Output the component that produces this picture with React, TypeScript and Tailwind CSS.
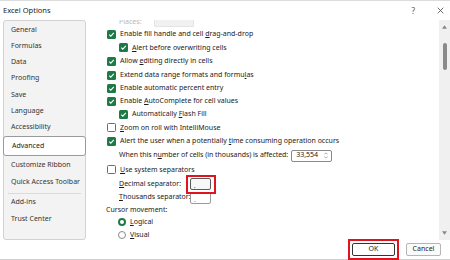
const font = { fontFamily: '"Noto Sans", "Open Sans", sans-serif' };

interface iCheckProps {
	checked?: boolean;
}

const Check = (props: iCheckProps) => {
	return props.checked ? (
		<span className="w-[9px] h-[9px] rounded-[1.5px] bg-[#1d7a46] flex items-center justify-center shrink-0">
			<svg width="7" height="7" viewBox="0 0 10 10">
				<path d="M1.8 5.2 L4 7.3 L8.3 2.7" stroke="white" strokeWidth="1.6" fill="none" />
			</svg>
		</span>
	) : (
		<span className="w-[9px] h-[9px] rounded-[1.5px] border border-[#6b6b6b] bg-white shrink-0"></span>
	);
};

interface iRowProps {
	h: string;
	indent?: boolean;
	checked?: boolean;
	children: React.ReactNode;
}

const Row = (props: iRowProps) => {
	return (
		<div className={`flex items-center gap-[4px] ${props.h} ${props.indent ? "pl-[12px]" : ""}`}>
			<Check checked={props.checked} />
			<span className="whitespace-nowrap">{props.children}</span>
		</div>
	);
};

const NavItem = ({ label, active }: { label: string; active?: boolean }) => {
	if (active) {
		return (
			<div className="-mx-[1px] h-[20px] my-[1px] flex items-center px-[8px] bg-white border border-[#9a9a9a] rounded-[3px] text-[#1a1a1a] whitespace-nowrap">
				{label}
			</div>
		);
	}
	return <div className="h-[16.2px] flex items-center px-[7px] text-[#333] whitespace-nowrap">{label}</div>;
};

const U = ({ children }: { children: React.ReactNode }) => <span className="underline underline-offset-[1px]">{children}</span>;

export default function App() {
	return (
		<div className="w-[450px] h-[260px] bg-white flex flex-col text-[7px] text-[#1b1b1b] border-t border-[#dcdcdc] overflow-hidden" style={font}>
			{/* title bar */}
			<div className="h-[19px] flex items-center pl-[3px] pr-[6px] text-[7.5px] text-[#222]">
				<span className="flex-1">Excel Options</span>
				<span className="mr-[22px] text-[#555] text-[8px]">?</span>
				<svg width="7" height="7" viewBox="0 0 10 10">
					<path d="M1 1 L9 9 M9 1 L1 9" stroke="#444" strokeWidth="1.1" />
				</svg>
			</div>

			<div className="flex flex-1 min-h-0">
				{/* side nav */}
				<div className="ml-[3px] w-[83px] h-[220px] bg-[#f3f3f3] border border-[#d2d2d2] rounded-[3px] pt-[1px] flex flex-col">
					<NavItem label="General" />
					<NavItem label="Formulas" />
					<NavItem label="Data" />
					<NavItem label="Proofing" />
					<NavItem label="Save" />
					<NavItem label="Language" />
					<NavItem label="Accessibility" />
					<NavItem label="Advanced" active />
					<NavItem label="Customize Ribbon" />
					<div className="h-[18px] flex items-center px-[7px] text-[#333] whitespace-nowrap">Quick Access Toolbar</div>
					<div className="mx-[4px] h-px bg-[#dadada] my-[1px]"></div>
					<NavItem label="Add-ins" />
					<NavItem label="Trust Center" />
				</div>

				{/* content */}
				<div className="flex-1 h-[220px] overflow-hidden pl-[21px]">
					<div className="-mt-[3px]">
						<div className="flex items-center h-[11px] pl-[12px] gap-[12px] text-[#b8b8b8]">
							<span>Places:</span>
							<span className="w-[40px] h-[8px] bg-[#f1f1f1] border border-[#e4e4e4] rounded-[1px]"></span>
						</div>
						<Row h="h-[13px]" checked>Enable fill handle and cell <U>d</U>rag-and-drop</Row>
						<Row h="h-[13.5px]" indent checked><U>A</U>lert before overwriting cells</Row>
						<Row h="h-[14px]" checked>Allow <U>e</U>diting directly in cells</Row>
						<Row h="h-[13.5px]" checked>Extend data range formats and formu<U>l</U>as</Row>
						<Row h="h-[13px]" checked>Enable automatic percent entry</Row>
						<Row h="h-[13px]" checked>Enable <U>A</U>utoComplete for cell values</Row>
						<Row h="h-[13px]" indent checked>Automatically <U>F</U>lash Fill</Row>
						<Row h="h-[13.5px]"><U>Z</U>oom on roll with IntelliMouse</Row>
						<Row h="h-[14px]" checked>Alert the user when a potentially <U>t</U>ime consuming operation occurs</Row>
						<div className="flex items-center h-[14px] pl-[12px] gap-[3px]">
							<span className="whitespace-nowrap tracking-[-0.05px]">When this n<U>u</U>mber of cells (in thousands) is affected:</span>
							<div className="w-[41px] h-[12px] border border-[#8a8a8a] rounded-[2px] flex items-center pl-[4px] pr-[3px]">
								<span className="flex-1">33,554</span>
								<div className="flex flex-col items-center gap-[1px]">
									<svg width="4" height="3" viewBox="0 0 6 4"><path d="M0.5 3.5 L3 1 L5.5 3.5" stroke="#777" strokeWidth="0.9" fill="none" /></svg>
									<svg width="4" height="3" viewBox="0 0 6 4"><path d="M0.5 0.5 L3 3 L5.5 0.5" stroke="#777" strokeWidth="0.9" fill="none" /></svg>
								</div>
							</div>
						</div>
						<Row h="h-[14.5px]"><U>U</U>se system separators</Row>
						<div className="flex items-center h-[14px] pl-[12px]">
							<span className="w-[71px] whitespace-nowrap"><U>D</U>ecimal separator:</span>
							<div className="relative w-[21px] h-[12px] border border-[#5a5a5a] rounded-[2px] bg-[#f7f7f7] flex items-end pl-[3px] leading-none text-[6px]">
								,
								<div className="absolute -left-[5px] -top-[4px] w-[30px] h-[19px] border-[2px] border-[#e0141e]"></div>
							</div>
						</div>
						<div className="flex items-center h-[13px] pl-[12px]">
							<span className="w-[71px] whitespace-nowrap"><U>T</U>housands separator:</span>
							<div className="w-[21px] h-[12px] border border-[#9a9a9a] rounded-[2px] flex items-end pl-[3px] leading-none text-[6px]">.</div>
						</div>
						<div className="flex items-center h-[12px] -ml-[1px]">Cursor movement:</div>
						<div className="flex items-center h-[12.5px] pl-[11px] gap-[4px]">
							<span className="w-[8px] h-[8px] rounded-full border-[2px] border-[#1d7a46] bg-white"></span>
							<span><U>L</U>ogical</span>
						</div>
						<div className="flex items-center h-[12.5px] pl-[11px] gap-[4px]">
							<span className="w-[8px] h-[8px] rounded-full border border-[#8a8a8a] bg-white"></span>
							<span><U>V</U>isual</span>
						</div>
					</div>
				</div>

				{/* scrollbar */}
				<div className="w-[11px] h-[220px] bg-[#f0f0f0] flex flex-col items-center pt-[5px] pb-[5px]">
					<svg width="5" height="4" viewBox="0 0 6 4"><path d="M0 4 L3 0 L6 4 Z" fill="#888" /></svg>
					<div className="mt-[14px] w-[4px] h-[27px] rounded-full bg-[#8a8a8a]"></div>
					<div className="flex-1"></div>
					<svg width="5" height="4" viewBox="0 0 6 4"><path d="M0 0 L3 4 L6 0 Z" fill="#888" /></svg>
				</div>
			</div>

			{/* footer */}
			<div className="h-[21px] flex items-center justify-end pr-[9px] gap-[7px] border-b border-[#cfcfcf]">
				<div className="border-[2px] border-[#e0141e] p-[2px]">
					<div className="w-[43px] h-[13px] border border-[#333] rounded-[2px] flex items-center justify-center bg-white">OK</div>
				</div>
				<div className="w-[35px] h-[13px] border border-[#b5b5b5] rounded-[2px] flex items-center justify-center bg-[#fbfbfb]">Cancel</div>
			</div>
		</div>
	);
}
